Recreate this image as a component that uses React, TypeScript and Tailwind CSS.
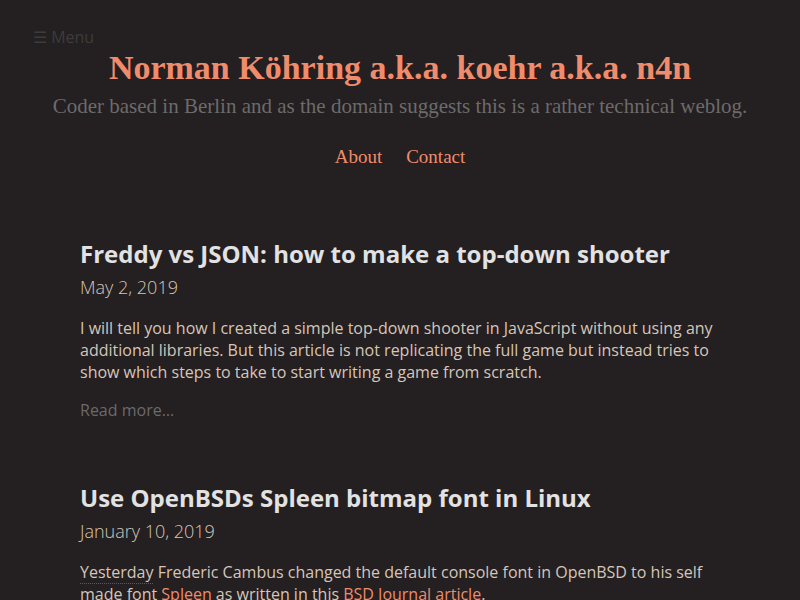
import React from "react";

export default function App() {
  return (
    <div className="min-h-[600px] bg-[#241f20] overflow-hidden" style={{ fontFamily: '"Open Sans", sans-serif' }}>
      <div className="px-[33px] pt-[26px] h-[22px] text-[16px] leading-[22px] text-[#3c3c3c]">
        ☰ Menu
      </div>
      <header className="text-center" style={{ fontFamily: '"Liberation Serif", serif' }}>
        <h1 className="mt-[20px] text-[34px] leading-[44px] font-bold text-[#f08c6c]">
          Norman Köhring a.k.a. koehr a.k.a. n4n
        </h1>
        <p className="mt-[2px] text-[21px] leading-[28px] text-[#6b6b6b]">
          Coder based in Berlin and as the domain suggests this is a rather technical weblog.
        </p>
        <nav className="mt-[24px] flex justify-center gap-[24px] text-[19px] leading-[26px] text-[#f08c6c]">
          <a>About</a>
          <a>Contact</a>
        </nav>
      </header>
      <main className="mx-[80px] mt-[68px]">
        <article>
          <h2 className="text-[24px] leading-[32px] font-bold text-[#e2e2e2]">
            Freddy vs JSON: how to make a top-down shooter
          </h2>
          <div className="mt-[5px] text-[18px] leading-[24px] font-light text-[#d6c6ba]">May 2, 2019</div>
          <p className="mt-[18px] text-[16px] leading-[22px] text-[#d6c6ba]">
            I will tell you how I created a simple top-down shooter in JavaScript without using any additional libraries. But this article is not replicating the full game but instead tries to show which steps to take to start writing a game from scratch.
          </p>
          <div className="mt-[16px] text-[16px] leading-[22px] text-[#6a6a6a]">Read more…</div>
        </article>
        <article className="mt-[61px]">
          <h2 className="text-[24px] leading-[32px] font-bold text-[#e2e2e2]">
            Use OpenBSDs Spleen bitmap font in Linux
          </h2>
          <div className="mt-[5px] text-[18px] leading-[24px] font-light text-[#d6c6ba]">January 10, 2019</div>
          <p className="mt-[18px] text-[16px] leading-[22px] text-[#d6c6ba]">
            <abbr className="no-underline border-b border-dotted border-[#5a5a5a]">Yesterday</abbr> Frederic Cambus changed the default console font in OpenBSD to his self made font <a className="text-[#f08c6c]">Spleen</a> as written in this <a className="text-[#f08c6c]">BSD Journal article</a>.
          </p>
        </article>
      </main>
    </div>
  );
}
